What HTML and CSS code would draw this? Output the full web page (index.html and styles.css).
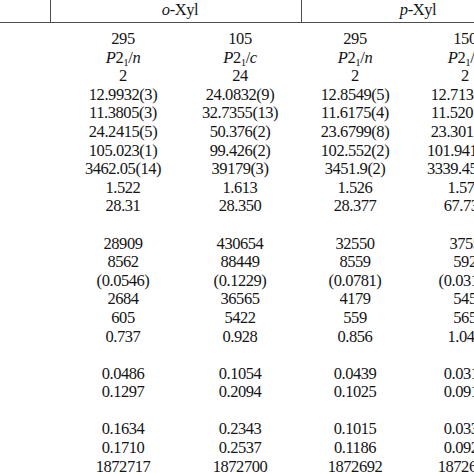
FILE: index.html
```html
<!DOCTYPE html>
<html>
<head>
<meta charset="utf-8">
<link rel="stylesheet" href="styles.css">
</head>
<body>
<div class="table">
  <div class="head">
    <div class="head-stub"></div>
    <div class="head-group group-o"><span><i>o</i>-Xyl</span></div>
    <div class="head-group group-p"><span><i>p</i>-Xyl</span></div>
  </div>
  <div class="data">
    <div class="col col-stub"></div>
    <div class="col col-1">
      <div>295</div>
      <div><i>P</i>2<sub>1</sub>/<i>n</i></div>
      <div>2</div>
      <div>12.9932(3)</div>
      <div>11.3805(3)</div>
      <div>24.2415(5)</div>
      <div>105.023(1)</div>
      <div>3462.05(14)</div>
      <div>1.522</div>
      <div>28.31</div>
      <div class="blank"></div>
      <div>28909</div>
      <div>8562</div>
      <div>(0.0546)</div>
      <div>2684</div>
      <div>605</div>
      <div>0.737</div>
      <div class="blank"></div>
      <div>0.0486</div>
      <div>0.1297</div>
      <div class="blank"></div>
      <div>0.1634</div>
      <div>0.1710</div>
      <div>1872717</div>
    </div>
    <div class="col col-2">
      <div>105</div>
      <div><i>P</i>2<sub>1</sub>/<i>c</i></div>
      <div>24</div>
      <div>24.0832(9)</div>
      <div>32.7355(13)</div>
      <div>50.376(2)</div>
      <div>99.426(2)</div>
      <div>39179(3)</div>
      <div>1.613</div>
      <div>28.350</div>
      <div class="blank"></div>
      <div>430654</div>
      <div>88449</div>
      <div>(0.1229)</div>
      <div>36565</div>
      <div>5422</div>
      <div>0.928</div>
      <div class="blank"></div>
      <div>0.1054</div>
      <div>0.2094</div>
      <div class="blank"></div>
      <div>0.2343</div>
      <div>0.2537</div>
      <div>1872700</div>
    </div>
    <div class="col col-3">
      <div>295</div>
      <div><i>P</i>2<sub>1</sub>/<i>n</i></div>
      <div>2</div>
      <div>12.8549(5)</div>
      <div>11.6175(4)</div>
      <div>23.6799(8)</div>
      <div>102.552(2)</div>
      <div>3451.9(2)</div>
      <div>1.526</div>
      <div>28.377</div>
      <div class="blank"></div>
      <div>32550</div>
      <div>8559</div>
      <div>(0.0781)</div>
      <div>4179</div>
      <div>559</div>
      <div>0.856</div>
      <div class="blank"></div>
      <div>0.0439</div>
      <div>0.1025</div>
      <div class="blank"></div>
      <div>0.1015</div>
      <div>0.1186</div>
      <div>1872692</div>
    </div>
    <div class="col col-4">
      <div>150</div>
      <div><i>P</i>2<sub>1</sub>/<i>n</i></div>
      <div>2</div>
      <div>12.7136(4)</div>
      <div>11.5203(3)</div>
      <div>23.3012(7)</div>
      <div>101.941(10)</div>
      <div>3339.45(16)</div>
      <div>1.573</div>
      <div>67.730</div>
      <div class="blank"></div>
      <div>3755</div>
      <div>592</div>
      <div>(0.0312)</div>
      <div>545</div>
      <div>565</div>
      <div>1.045</div>
      <div class="blank"></div>
      <div>0.0312</div>
      <div>0.0918</div>
      <div class="blank"></div>
      <div>0.0335</div>
      <div>0.0926</div>
      <div>1872694</div>
    </div>
  </div>
</div>
</body>
</html>
```

FILE: styles.css
```css
* {
  box-sizing: border-box;
}

html, body {
  margin: 0;
  padding: 0;
  background: #ffffff;
}

body {
  width: 474px;
  height: 474px;
  overflow: hidden;
  color: #141414;
  font-family: "Liberation Serif", "Times New Roman", serif;
  font-size: 16.5px;
  letter-spacing: -0.45px;
}

.table {
  width: 560px;
}

.head {
  display: flex;
  height: 23px;
  border-bottom: 1px solid #4f4f4f;
}

.head-stub {
  flex: none;
  width: 51px;
  border-right: 1px solid #4f4f4f;
}

.head-group {
  flex: none;
  display: flex;
  align-items: center;
  justify-content: center;
  padding-bottom: 2px;
}

.group-o {
  width: 251px;
  padding-left: 8px;
  border-right: 1px solid #4f4f4f;
}

.group-p {
  width: 232px;
}

.data {
  display: flex;
  padding-top: 7px;
  line-height: 18.6px;
}

.col {
  flex: none;
  text-align: center;
  white-space: nowrap;
}

.col-stub { width: 50px; }
.col-1 { width: 146px; }
.col-2 { width: 88px; }
.col-3 { width: 142px; }
.col-4 { width: 78px; }

.blank {
  height: 18.6px;
}

sub {
  font-size: 0.66em;
  line-height: 0;
  vertical-align: -0.28em;
}
```
